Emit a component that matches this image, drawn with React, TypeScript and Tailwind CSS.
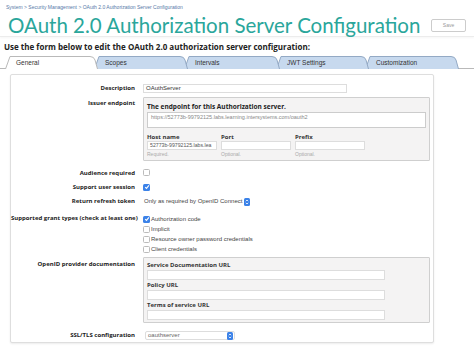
import React from "react";

const tabs = [
  { label: "General", width: 93, active: true },
  { label: "Scopes", width: 94, active: false },
  { label: "Intervals", width: 96, active: false },
  { label: "JWT Settings", width: 93, active: false },
  { label: "Customization", width: 94, active: false },
];

function Tab({ label, width, active, z }: { label: string; width: number; active: boolean; z: number }) {
  return (
    <div className="relative h-[13px] shrink-0" style={{ width, zIndex: z, marginRight: -4 }}>
      <svg className="absolute inset-0" width={width} height={13} viewBox={`0 0 ${width} 13`}>
        <path
          d={`M0.5 13 L5 0.5 L${width - 8} 0.5 Q${width - 4} 0.5 ${width - 3} 4 L${width - 0.5} 13`}
          fill={active ? "#ffffff" : "#c7d9ee"}
          stroke={active ? "#b9b9b9" : "#93a9c4"}
          strokeWidth="1"
        />
      </svg>
      <span
        className="relative block pl-[11px] pt-[2px] text-[6.5px] leading-[9px] text-[#333]"
        style={{ fontFamily: "'Liberation Sans', Arial, sans-serif" }}
      >
        {label}
      </span>
    </div>
  );
}

function Label({ children }: { children: React.ReactNode }) {
  return (
    <div className="w-[132px] shrink-0 whitespace-nowrap pr-[8px] text-right text-[6px] font-bold leading-[9px] text-[#222]">
      {children}
    </div>
  );
}

function Checkbox({ checked }: { checked?: boolean }) {
  return checked ? (
    <span className="inline-flex h-[7px] w-[7px] items-center justify-center rounded-[1.5px] bg-[#3b82e8]">
      <svg width="6" height="6" viewBox="0 0 6 6">
        <path d="M1.2 3.1 L2.5 4.4 L4.9 1.4" stroke="white" strokeWidth="1.1" fill="none" />
      </svg>
    </span>
  ) : (
    <span className="inline-block h-[7px] w-[7px] rounded-[1.5px] border border-[#bbb] bg-white" />
  );
}

function SelectArrow() {
  return (
    <span className="inline-flex h-[8px] w-[6px] items-center justify-center rounded-[1.5px] bg-[#3b82e8]">
      <svg width="4" height="6" viewBox="0 0 4 6">
        <path d="M0.8 2.2 L2 1 L3.2 2.2 M0.8 3.8 L2 5 L3.2 3.8" stroke="white" strokeWidth="0.8" fill="none" />
      </svg>
    </span>
  );
}

const input = "h-[9px] border border-[#ddd] bg-white";

export default function App() {
  const sans = { fontFamily: "'Open Sans', 'DejaVu Sans', sans-serif" };
  const arial = { fontFamily: "'Liberation Sans', Arial, sans-serif" };
  return (
    <div className="h-[348px] w-[474px] overflow-hidden bg-white" style={sans}>
      {/* header */}
      <div className="h-[37px] border-b border-[#ececec] bg-white shadow-[0_1px_2px_rgba(0,0,0,0.04)]">
        <div className="pl-[6px] pt-[4px] text-[5px] leading-[6px] text-[#5679a8]" style={arial}>
          System &gt; Security Management &gt; OAuth 2.0 Authorization Server Configuration
        </div>
        <div className="flex items-center justify-between pl-[8px] pr-[8px] pt-[4px]">
          <div
            className="whitespace-nowrap text-[20.5px] leading-[23px] text-[#2aa69b]"
            style={{ fontFamily: "Lato, 'Open Sans', sans-serif" }}
          >
            OAuth 2.0 Authorization Server Configuration
          </div>
          <div
            className="flex h-[13px] w-[35px] shrink-0 items-center justify-center rounded-[2px] border border-[#ccc] bg-white text-[5px] text-[#999]"
            style={arial}
          >
            Save
          </div>
        </div>
      </div>

      <div className="whitespace-nowrap pl-[4px] pt-[4px] text-[8px] font-bold leading-[12px] text-[#222]">
        Use the form below to edit the OAuth 2.0 authorization server configuration:
      </div>

      {/* tabs */}
      <div className="relative mt-[3px] flex pl-[5px]">
        {tabs.map((t, i) => (
          <Tab key={t.label} label={t.label} width={t.width} active={t.active} z={t.active ? 10 : 5 - i} />
        ))}
      </div>
      <div className="relative -mt-px flex h-[300px] border-t border-[#b9b9b9]">
        <div className="absolute left-[6px] top-[-1px] h-px w-[92px] bg-white" />
        <div className="ml-[10px] mt-[5px] h-[269px] w-[424px] rounded-[2px] border border-[#dedede] bg-white shadow-[0_1px_2px_rgba(0,0,0,0.08)]">
          <div className="flex flex-col pt-[9px] text-[6.5px] leading-[9px] text-[#333]">
            {/* Description */}
            <div className="flex items-center">
              <Label>Description</Label>
              <div className="flex h-[9px] w-[204px] items-center border border-[#ddd] pl-[2px] text-[6px]" style={arial}>
                OAuthServer
              </div>
            </div>

            {/* Issuer endpoint */}
            <div className="mt-[4px] flex items-start">
              <div className="pt-[2px]">
                <Label>Issuer endpoint</Label>
              </div>
              <div className="h-[64px] w-[287px] rounded-[1px] border border-[#cfcfcf] bg-[#f4f3f3] px-[3px] pt-[4px]">
                <div className="text-[6.5px] font-bold leading-[9px] text-[#222]">The endpoint for this Authorization server.</div>
                <div
                  className="mt-[1px] h-[16px] w-[279px] border border-[#ccc] bg-white pl-[3px] pt-[1px] text-[5.5px] leading-[7px] text-[#888]"
                  style={arial}
                >
                  https://52773b-99792125.labs.learning.intersystems.com/oauth2
                </div>
                <div className="mt-[5px] flex gap-[4px]">
                  <div className="w-[70px]">
                    <div className="text-[6px] font-bold leading-[8px] text-[#333]">Host name</div>
                    <div
                      className={`${input} w-[70px] whitespace-nowrap pl-[2px] text-[5.2px] leading-[7px] text-[#555]`}
                      style={arial}
                    >
                      52773b-99792125.labs.lea
                    </div>
                    <div className="text-[5px] leading-[8px] text-[#aaa]" style={arial}>Required.</div>
                  </div>
                  <div className="w-[70px]">
                    <div className="text-[6px] font-bold leading-[8px] text-[#333]">Port</div>
                    <div className={`${input} w-[70px]`} />
                    <div className="text-[5px] leading-[8px] text-[#aaa]" style={arial}>Optional.</div>
                  </div>
                  <div className="w-[70px]">
                    <div className="text-[6px] font-bold leading-[8px] text-[#333]">Prefix</div>
                    <div className={`${input} w-[70px]`} />
                    <div className="text-[5px] leading-[8px] text-[#aaa]" style={arial}>Optional.</div>
                  </div>
                </div>
              </div>
            </div>

            <div className="mt-[8px] flex items-center">
              <Label>Audience required</Label>
              <div><Checkbox /></div>
            </div>
            <div className="mt-[5px] flex items-center">
              <Label>Support user session</Label>
              <div><Checkbox checked /></div>
            </div>
            <div className="mt-[5px] flex items-center">
              <Label>Return refresh token</Label>
              <div className="flex items-center gap-[2px] pl-[1px] text-[6px] text-[#444]" style={arial}>
                Only as required by OpenID Connect <SelectArrow />
              </div>
            </div>

            {/* grant types */}
            <div className="mt-[8px] flex items-start">
              <Label>Supported grant types (check at least one)</Label>
              <div className="flex flex-col text-[6px] leading-[10px] text-[#444]" style={arial}>
                <div className="flex items-center gap-[1px]"><Checkbox checked />Authorization code</div>
                <div className="flex items-center gap-[1px]"><Checkbox />Implicit</div>
                <div className="flex items-center gap-[1px]"><Checkbox />Resource owner password credentials</div>
                <div className="flex items-center gap-[1px]"><Checkbox />Client credentials</div>
              </div>
            </div>

            {/* OpenID provider doc */}
            <div className="mt-[3px] flex items-start">
              <div className="pt-[3px]"><Label>OpenID provider documentation</Label></div>
              <div className="h-[66px] w-[287px] rounded-[1px] border border-[#cfcfcf] bg-[#f4f3f3] px-[3px] pt-[3px]">
                <div className="text-[6px] font-bold leading-[9px] text-[#333]">Service Documentation URL</div>
                <div className={`${input} h-[10px] w-[238px]`} />
                <div className="mt-[1px] text-[6px] font-bold leading-[9px] text-[#333]">Policy URL</div>
                <div className={`${input} h-[10px] w-[238px]`} />
                <div className="mt-[1px] text-[6px] font-bold leading-[9px] text-[#333]">Terms of service URL</div>
                <div className={`${input} h-[10px] w-[238px]`} />
              </div>
            </div>

            {/* SSL */}
            <div className="mt-[8px] flex items-center">
              <Label>SSL/TLS configuration</Label>
              <div
                className="ml-[2px] flex h-[9px] w-[90px] items-center justify-between rounded-[2px] border border-[#ddd] pl-[2px] pr-[1px] text-[6px] text-[#666]"
                style={arial}
              >
                oauthserver <SelectArrow />
              </div>
            </div>
          </div>
        </div>
      </div>
    </div>
  );
}
